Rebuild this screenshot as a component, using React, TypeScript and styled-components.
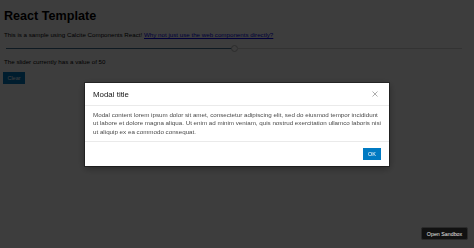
import React from "react";
import styled, { createGlobalStyle } from "styled-components";

const Global = createGlobalStyle`
  html, body { margin: 0; padding: 0; background: #ffffff; }
  body { font-family: "Liberation Sans", Arial, sans-serif; color: #000; }
  * { box-sizing: border-box; }
`;

const Page = styled.main`
  padding: 4px 4px 0 4px;
  display: flex;
  flex-direction: column;
  height: 248px;
`;

const Heading = styled.h1`
  margin: 4px 0 0 0;
  font-size: 12.6px;
  line-height: 16px;
  font-weight: bold;
`;

const Para = styled.p`
  margin: 7px 0 0 0;
  font-size: 6.2px;
  line-height: 8px;
`;

const Link = styled.a`
  color: #0000ee;
  text-decoration: underline;
`;

const SliderRow = styled.div`
  margin: 5px 8px 0 2px;
  height: 8px;
  display: flex;
  align-items: center;
`;

const Track = styled.div<{ $active?: boolean }>`
  height: 1px;
  flex: 1;
  background: ${(p) => (p.$active ? "#3f6f8f" : "#d6d6d6")};
`;

const Thumb = styled.div`
  width: 7px;
  height: 7px;
  border-radius: 50%;
  border: 1.5px solid #b9b9b9;
  background: #ffffff;
  margin: 0 -1px;
  flex: none;
`;

const Value = styled.p`
  margin: 6px 0 0 0;
  font-size: 6.2px;
  line-height: 8px;
`;

const ClearButton = styled.button`
  margin: 6px 0 0 -1px;
  width: 22px;
  height: 12px;
  padding: 0;
  border: none;
  background: #007ac2;
  color: #ffffff;
  font-family: inherit;
  font-size: 5.5px;
`;

const Overlay = styled.div`
  position: fixed;
  inset: 0;
  background: rgba(0, 0, 0, 0.76);
  display: flex;
  align-items: center;
  justify-content: center;
`;

const Modal = styled.div`
  width: 304px;
  background: #ffffff;
  box-shadow: 0 0 0 1px rgba(0, 0, 0, 0.35), 0 2px 8px rgba(0, 0, 0, 0.4);
  display: flex;
  flex-direction: column;
  margin-top: 1px;
`;

const ModalHeader = styled.header`
  height: 23px;
  display: flex;
  align-items: center;
  justify-content: space-between;
  padding: 0 10px 0 8px;
  border-bottom: 1px solid #eaeaea;
`;

const ModalTitle = styled.h2`
  margin: 0;
  font-size: 7.9px;
  font-weight: normal;
  color: #151515;
`;

const Close = styled.button`
  border: none;
  background: none;
  padding: 0;
  width: 8px;
  height: 8px;
  display: flex;
  align-items: center;
  justify-content: center;
`;

const ModalBody = styled.div`
  padding: 5px 8px 5px 8px;
  font-size: 6.22px;
  line-height: 8.3px;
  color: #4a4a4a;
  border-bottom: 1px solid #eaeaea;
`;

const ModalFooter = styled.footer`
  height: 24px;
  display: flex;
  align-items: center;
  justify-content: flex-end;
  padding: 0 8px;
`;

const OkButton = styled.button`
  width: 18px;
  height: 12px;
  padding: 0;
  border: none;
  background: #007ac2;
  color: #ffffff;
  font-family: inherit;
  font-size: 5.5px;
  margin-top: 1px;
`;

const SandboxButton = styled.button`
  position: fixed;
  right: 6px;
  bottom: 8px;
  width: 47px;
  height: 13px;
  padding: 0;
  background: #111111;
  color: #e8e8e8;
  border: 1px solid #2a2a2a;
  border-radius: 2px;
  font-family: inherit;
  font-size: 5.3px;
`;

export default function App() {
  return (
    <>
      <Global />
      <Page>
        <Heading>React Template</Heading>
        <Para>
          This is a sample using Calcite Components React!{" "}
          <Link href="#">Why not just use the web components directly?</Link>
        </Para>
        <SliderRow>
          <Track $active />
          <Thumb />
          <Track />
        </SliderRow>
        <Value>The slider currently has a value of 50</Value>
        <div>
          <ClearButton>Clear</ClearButton>
        </div>
      </Page>
      <Overlay>
        <Modal>
          <ModalHeader>
            <ModalTitle>Modal title</ModalTitle>
            <Close aria-label="close">
              <svg width="6" height="6" viewBox="0 0 6 6">
                <path d="M0.5 0.5L5.5 5.5M5.5 0.5L0.5 5.5" stroke="#8a8a8a" strokeWidth="0.7" fill="none" />
              </svg>
            </Close>
          </ModalHeader>
          <ModalBody>
            Modal content lorem ipsum dolor sit amet, consectetur adipiscing elit, sed do eiusmod tempor incididunt
            ut labore et dolore magna aliqua. Ut enim ad minim veniam, quis nostrud exercitation ullamco laboris nisi
            ut aliquip ex ea commodo consequat.
          </ModalBody>
          <ModalFooter>
            <OkButton>OK</OkButton>
          </ModalFooter>
        </Modal>
      </Overlay>
      <SandboxButton>Open Sandbox</SandboxButton>
    </>
  );
}
